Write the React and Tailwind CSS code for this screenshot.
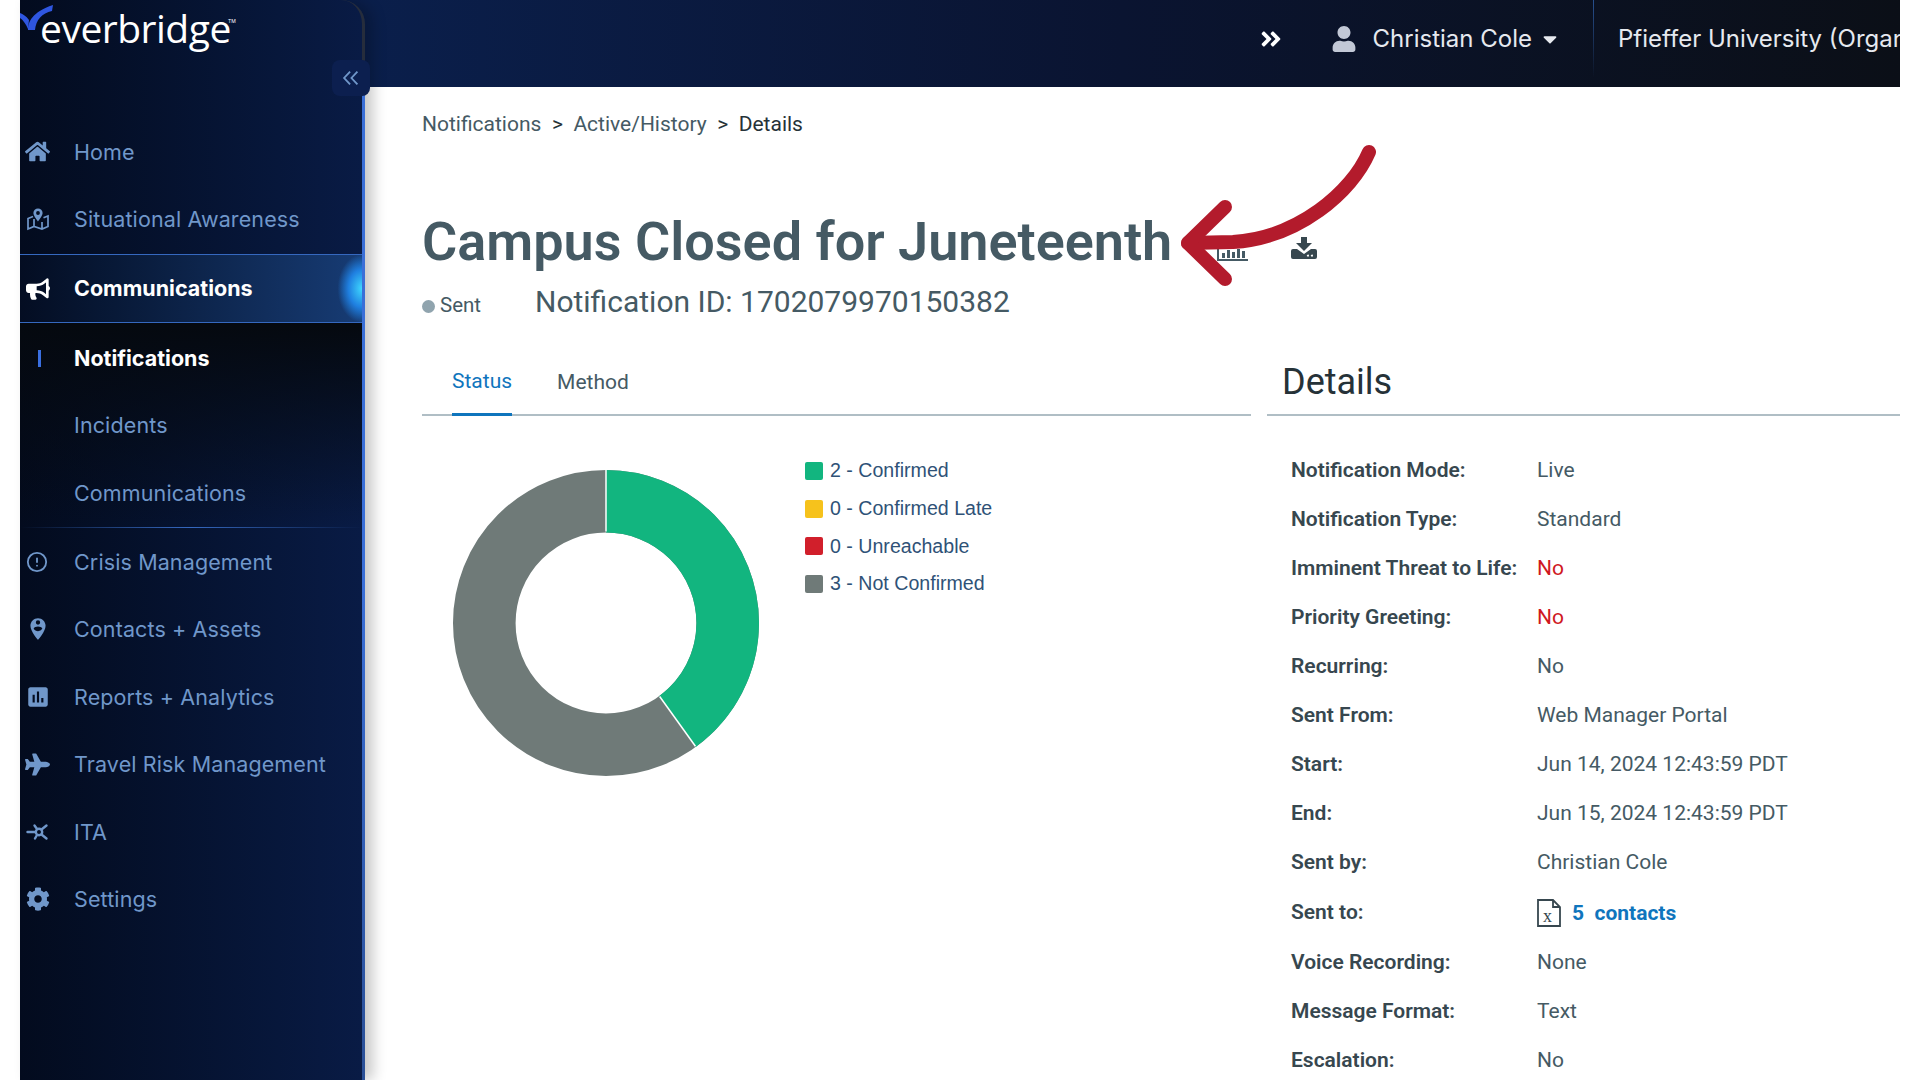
// Everbridge notification details page
import { FaAngleDoubleRight, FaBullhorn, FaCaretDown, FaCog, FaHome, FaPlane, FaUser } from 'react-icons/fa';
import { MdInsertChart, MdPersonPinCircle } from 'react-icons/md';
import { FiAlertCircle } from 'react-icons/fi';

function MapIcon({ className }) {
  return (
    <svg viewBox="0 0 24 24" className={className} fill="none" stroke="currentColor" strokeWidth="1.7">
      <path d="M7 9.5 2 11.5V22l6-2.5 8 2.5 6-2.5V9l-4.5 1.8M8 12v7.5M16 15v6.5" />
      <path fill="currentColor" stroke="none" d="M12 1.5a4.6 4.6 0 0 0-4.6 4.6c0 3 4.6 8.4 4.6 8.4s4.6-5.4 4.6-8.4A4.6 4.6 0 0 0 12 1.5Zm0 6.4a1.9 1.9 0 1 1 0-3.8 1.9 1.9 0 0 1 0 3.8Z" />
    </svg>
  );
}

function ItaIcon({ className }) {
  return (
    <svg viewBox="0 0 24 24" className={className} fill="none" stroke="currentColor" strokeWidth="2.4" strokeLinecap="round">
      <circle cx="13" cy="12" r="3.2" />
      <path d="M1.5 12H9.5M15.5 9.5 20.5 5.5M15.5 14.5 20.5 18.5M11 9 8.5 5.5M11 15 9 18.5" />
    </svg>
  );
}

function Logo() {
  return (
    <div className="relative h-[118px] shrink-0">
      <svg viewBox="0 0 34 30" className="absolute left-0 top-[4px] w-[34px] h-[30px]">
        <path fill="#2f56e0" d="M8 26C8 18 12 8 33 1L32 7C22 9 16 16 15 26Z" />
        <path fill="#2f56e0" d="M0 9C3 10 6 12 9 16L8 25C6 20 3 16 0 14Z" />
      </svg>
      <div className="absolute left-[20px] top-[0px] font-['Open_Sans',sans-serif] font-medium text-[39px] leading-[56px] tracking-[-0.5px] text-white">
        everbridge
      </div>
      <div className="absolute left-[208px] top-[19px] text-[5px] leading-none text-white">TM</div>
    </div>
  );
}

function NavRow({ icon: Icon, label, iconClass = 'w-[24px] h-[24px]' }) {
  return (
    <div className="flex items-center h-[67.5px] text-[#7097ca]">
      <div className="w-[54px] pl-[6px] flex items-center shrink-0">
        {Icon && <Icon className={iconClass} />}
      </div>
      <span className="text-[21.5px] tracking-[0.12px]">{label}</span>
    </div>
  );
}

function Sidebar() {
  return (
    <aside className="relative z-10 w-[345px] shrink-0 h-full flex flex-col rounded-tr-[24px] border-r-[3px] border-[#262d3c] bg-gradient-to-r from-[#030b1e] to-[#091b45] font-['Inter',sans-serif] shadow-[8px_0_14px_rgba(0,0,0,0.22)]">
      <div className="absolute top-[90px] bottom-0 right-[-3px] w-[3px] bg-gradient-to-b from-[#3a6fd8] via-[#3a6fd8] to-[#2a4f96]" />
      <Logo />
      <button className="absolute left-[312px] top-[60px] w-[38px] h-[36px] rounded-[8px] bg-[#0c1f4f] flex items-center justify-center">
        <svg viewBox="0 0 24 24" className="w-[22px] h-[22px]" fill="none" stroke="#7097ca" strokeWidth="2">
          <path d="M11 5 4.5 12l6.5 7M19 5l-6.5 7 6.5 7" />
        </svg>
      </button>
      <NavRow icon={FaHome} label="Home" iconClass="w-[25px] h-[25px] -ml-[1px]" />
      <NavRow icon={MapIcon} label="Situational Awareness" />

      <div className="relative h-[69px] mt-[1px] overflow-hidden flex items-center bg-gradient-to-r from-[#040d22] to-[#173c75] border-y border-[#3568bf] text-white">
        <div className="w-[54px] pl-[6px] shrink-0">
          <FaBullhorn className="w-[24px] h-[24px]" />
        </div>
        <span className="text-[21.5px] font-bold">Communications</span>
        <div className="absolute right-0 top-0 w-[24px] h-full bg-[radial-gradient(ellipse_at_right,#3fd8ff_0%,#1f7fe0_40%,transparent_72%)]" />
      </div>

      <div className="h-[204px] shrink-0 bg-gradient-to-b from-[#05090f] to-transparent">
        <div className="relative flex items-center h-[69px] pt-[2px] pl-[54px] text-white">
          <div className="absolute left-[18px] top-[27px] w-[3px] h-[17px] bg-[#3a6fe0]" />
          <span className="text-[21.5px] font-bold">Notifications</span>
        </div>
        <div className="flex items-center h-[66px] pl-[54px] text-[#7097ca]">
          <span className="text-[21.5px] tracking-[0.12px]">Incidents</span>
        </div>
        <div className="flex items-center h-[69px] pt-[2px] pl-[54px] text-[#7097ca]">
          <span className="text-[21.5px] tracking-[0.12px]">Communications</span>
        </div>
      </div>
      <div className="h-px shrink-0 bg-gradient-to-r from-transparent via-[#3568bf] to-transparent" />

      <NavRow icon={FiAlertCircle} label="Crisis Management" iconClass="w-[22px] h-[22px]" />
      <NavRow icon={MdPersonPinCircle} label="Contacts + Assets" iconClass="w-[26px] h-[26px] -ml-[1px]" />
      <NavRow icon={MdInsertChart} label="Reports + Analytics" iconClass="w-[26px] h-[26px] -ml-[1px]" />
      <NavRow icon={FaPlane} label="Travel Risk Management" iconClass="w-[25px] h-[25px] -ml-[1px]" />
      <NavRow icon={ItaIcon} label="ITA" />
      <NavRow icon={FaCog} label="Settings" />
    </aside>
  );
}

function Topbar() {
  return (
    <header className="h-[87px] shrink-0 flex items-center justify-end overflow-hidden pb-[10px] bg-gradient-to-r from-[#0a1f4c] via-[#0a1431] to-[#0b0f17] font-['Inter',sans-serif] text-[#e6e9ef]">
      <FaAngleDoubleRight className="w-[24px] h-[24px] text-white mr-[48px]" />
      <FaUser className="w-[26px] h-[26px] text-[#c2c8d6] mr-[16px]" />
      <span className="text-[24px] whitespace-nowrap">Christian Cole</span>
      <FaCaretDown className="w-[22px] h-[22px] ml-[7px] mr-[32px]" />
      <div className="w-px h-[78px] self-start bg-gradient-to-b from-[#27508f] to-transparent mr-[24px]" />
      <div className="w-[282px] overflow-hidden">
        <span className="text-[24px] whitespace-nowrap">Pfieffer University (Organization)</span>
      </div>
    </header>
  );
}

function Donut() {
  // 2 of 5 confirmed, the rest not confirmed
  const cx = 155;
  const cy = 155;
  const r = 122.5;
  const c = 2 * Math.PI * r;
  return (
    <svg viewBox="0 0 310 310" className="w-[308px] h-[308px] shrink-0">
      <circle cx={cx} cy={cy} r={r} fill="none" stroke="#6f7a78" strokeWidth="63" />
      <circle
        cx={cx}
        cy={cy}
        r={r}
        fill="none"
        stroke="#12b57f"
        strokeWidth="63"
        strokeDasharray={`${c * 0.4} ${c * 0.6}`}
        transform={`rotate(-90 ${cx} ${cy})`}
      />
      <path d="M155 1V63" stroke="#fff" strokeWidth="1.5" />
      <path d="M245 279 L209 229" stroke="#fff" strokeWidth="1.5" />
    </svg>
  );
}

const legend = [
  { label: '2 - Confirmed', swatch: 'bg-[#12b57f]' },
  { label: '0 - Confirmed Late', swatch: 'bg-[#f6c21c]' },
  { label: '0 - Unreachable', swatch: 'bg-[#d11f2b]' },
  { label: '3 - Not Confirmed', swatch: 'bg-[#6f7a78]' },
];

const details = [
  ['Notification Mode:', 'Live'],
  ['Notification Type:', 'Standard'],
  ['Imminent Threat to Life:', 'No', true],
  ['Priority Greeting:', 'No', true],
  ['Recurring:', 'No'],
  ['Sent From:', 'Web Manager Portal'],
  ['Start:', 'Jun 14, 2024 12:43:59 PDT'],
  ['End:', 'Jun 15, 2024 12:43:59 PDT'],
  ['Sent by:', 'Christian Cole'],
];

const detailsAfter = [
  ['Voice Recording:', 'None'],
  ['Message Format:', 'Text'],
  ['Escalation:', 'No'],
];

function DetailRow({ label, value, red }) {
  return (
    <div className="flex items-center h-[49px]">
      <div className="w-[246px] shrink-0 font-semibold text-[#37474f]">{label}</div>
      <div className={red ? 'text-[#d0181f]' : 'text-[#455a64]'}>{value}</div>
    </div>
  );
}

function TitleIcons() {
  return (
    <div className="flex items-end ml-[45px] gap-[43px] mt-[14px]">
      <svg viewBox="0 0 31 24" className="w-[31px] h-[24px]" fill="#455a64">
        <path d="M0 0h2v22h29v2H0ZM5 16h3v5H5ZM10 13h3v8h-3ZM15 15h3v6h-3ZM20 12h3v9h-3ZM25 14h3v7h-3Z" />
      </svg>
      <svg viewBox="0 0 26 22" className="w-[26px] h-[22px] mb-[2px]" fill="#37474f">
        <path d="M10 0h6v6h5l-8 8-8-8h5Z" />
        <path fillRule="evenodd" d="M2 12h4l7 5 7-5h4a2 2 0 0 1 2 2v6a2 2 0 0 1-2 2H2a2 2 0 0 1-2-2v-6a2 2 0 0 1 2-2Zm16 6.5a1 1 0 1 0 0 .1Zm4 0a1 1 0 1 0 0 .1Z" />
      </svg>
    </div>
  );
}

function CurvedArrow() {
  return (
    <svg viewBox="0 0 240 170" className="absolute left-[1170px] top-[130px] w-[240px] h-[170px] pointer-events-none" style={{ zIndex: 20 }}>
      <g fill="none" stroke="#b31b2c" strokeWidth="14" strokeLinecap="round" strokeLinejoin="round">
        <path d="M199 22C182 62 128 108 63 112L18 113" />
        <path d="M55 77 18 113 55 149" />
      </g>
    </svg>
  );
}

function Content() {
  return (
    <main className="flex-1 bg-white pl-[81px] font-['Roboto',sans-serif] overflow-hidden">
      <div className="flex items-center h-[30px] mt-[23px] text-[21px] text-[#455a64]">
        <span>Notifications</span>
        <span className="mx-[10.5px] text-[#263238]">&gt;</span>
        <span>Active/History</span>
        <span className="mx-[10.5px] text-[#263238]">&gt;</span>
        <span className="text-[#263238]">Details</span>
      </div>

      <div className="flex items-center h-[64px] mt-[70px]">
        <h1 className="text-[54px] font-semibold leading-none text-[#455a64] whitespace-nowrap">Campus Closed for Juneteenth</h1>
        <TitleIcons />
      </div>

      <div className="flex items-center h-[40px] mt-[11px]">
        <div className="w-[113px] flex items-center text-[20.5px] text-[#455a64]">
          <span className="w-[13px] h-[13px] rounded-full bg-[#90a4ae] mr-[5px] mt-[3px]" />
          Sent
        </div>
        <div className="text-[30px] text-[#455a64] mb-[7px]">Notification ID: 1702079970150382</div>
      </div>

      <div className="flex mt-[25px]">
        <section className="w-[829px] shrink-0">
          <div className="flex h-[66px] border-b-2 border-[#b0bec5] pl-[30px] gap-[45px] text-[21px]">
            <div className="h-[66px] flex items-center border-b-[3px] border-[#0f75bd] text-[#0f75bd]">Status</div>
            <div className="h-[66px] flex items-center text-[#455a64]">Method</div>
          </div>
          <div className="flex mt-[53px] pl-[30px]">
            <Donut />
            <div className="ml-[45px] -mt-[17px] font-['Liberation_Sans',sans-serif] text-[19.6px] text-[#2f5277]">
              {legend.map((item) => (
                <div key={item.label} className="flex items-center h-[37.7px]">
                  <span className={`w-[18px] h-[18px] rounded-[2px] mr-[7px] ${item.swatch}`} />
                  {item.label}
                </div>
              ))}
            </div>
          </div>
        </section>

        <section className="flex-1 ml-[16px]">
          <div className="flex items-center h-[66px] border-b-2 border-[#b0bec5] pl-[15px] text-[36px] text-[#263238]">Details</div>
          <div className="mt-[30px] pl-[24px] text-[21px]">
            {details.map(([label, value, red]) => (
              <DetailRow key={label} label={label} value={value} red={red} />
            ))}
            <div className="flex items-center h-[51px]">
              <div className="w-[246px] shrink-0 font-semibold text-[#37474f]">Sent to:</div>
              <svg viewBox="0 0 24 28" className="w-[24px] h-[28px] mr-[11px]" fill="none" stroke="#37474f" strokeWidth="1.8">
                <path d="M1 1h15l7 7v19H1ZM16 1v7h7" />
                <text x="6" y="23" fontFamily="Liberation Serif, serif" fontSize="18" fill="#37474f" stroke="none">x</text>
              </svg>
              <span className="font-bold text-[#0f75bd] mt-[2px]">5&nbsp; contacts</span>
            </div>
            {detailsAfter.map(([label, value]) => (
              <DetailRow key={label} label={label} value={value} />
            ))}
          </div>
        </section>
      </div>
    </main>
  );
}

export default function App() {
  return (
    <div className="relative w-[1920px] h-[1080px] overflow-hidden bg-white pl-[20px] pr-[20px] flex">
      <Sidebar />
      <div className="flex-1 min-w-0 -ml-[24px] flex flex-col h-full">
        <Topbar />
        <Content />
      </div>
      <CurvedArrow />
    </div>
  );
}
